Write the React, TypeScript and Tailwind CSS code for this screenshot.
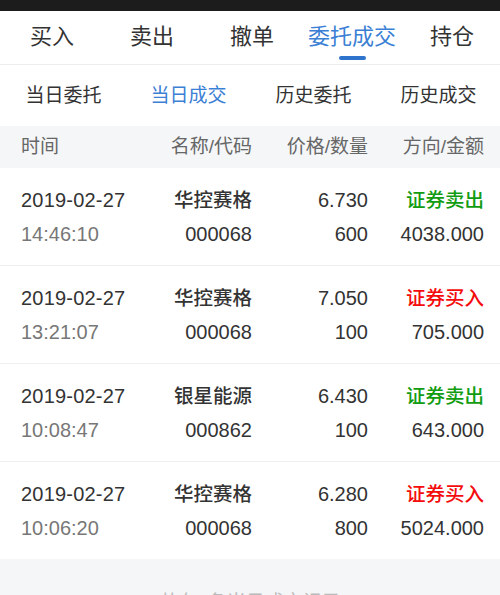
import { useState } from "react";

const mainTabs = ["买入", "卖出", "撤单", "委托成交", "持仓"];
const subTabs = ["当日委托", "当日成交", "历史委托", "历史成交"];

type Deal = {
  date: string;
  time: string;
  name: string;
  code: string;
  price: string;
  qty: string;
  side: "buy" | "sell";
  amount: string;
};

const deals: Deal[] = [
  { date: "2019-02-27", time: "14:46:10", name: "华控赛格", code: "000068", price: "6.730", qty: "600", side: "sell", amount: "4038.000" },
  { date: "2019-02-27", time: "13:21:07", name: "华控赛格", code: "000068", price: "7.050", qty: "100", side: "buy", amount: "705.000" },
  { date: "2019-02-27", time: "10:08:47", name: "银星能源", code: "000862", price: "6.430", qty: "100", side: "sell", amount: "643.000" },
  { date: "2019-02-27", time: "10:06:20", name: "华控赛格", code: "000068", price: "6.280", qty: "800", side: "buy", amount: "5024.000" },
];

const cols = "grid grid-cols-[1fr_112px_116px_116px] pl-[21px] pr-4";

export default function App() {
  const [tab, setTab] = useState(3);
  const [sub, setSub] = useState(1);

  return (
    <div className="w-[500px] h-[595px] overflow-hidden bg-[#f5f6f8] font-['Liberation_Sans','Noto_Sans_CJK_SC',sans-serif]">
      <div className="h-[11px] bg-[#1c1c1c]" />

      <div className="flex h-[54px] bg-white border-b border-[#ededed]">
        {mainTabs.map((t, i) => (
          <button
            key={t}
            onClick={() => setTab(i)}
            className={`relative flex-1 pb-[2px] text-[22px] leading-none ${
              i === tab ? "text-[#3b80d4]" : "text-[#333]"
            }`}
          >
            <span className="relative left-[2px]">{t}</span>
            {i === tab && (
              <span className="absolute left-1/2 bottom-[4px] -translate-x-[11px] w-[27px] h-[4px] rounded-full bg-[#2f74cc]" />
            )}
          </button>
        ))}
      </div>

      <div className="flex h-[61px] bg-white">
        {subTabs.map((t, i) => (
          <button
            key={t}
            onClick={() => setSub(i)}
            className={`flex-1 text-[19px] leading-none ${
              i === sub ? "text-[#3b80d4]" : "text-[#333]"
            }`}
          >
            <span className="relative left-[1px]">{t}</span>
          </button>
        ))}
      </div>

      <div className={`${cols} h-[42px] items-center text-[19px] text-[#666]`}>
        <div>时间</div>
        <div className="text-right">名称/代码</div>
        <div className="text-right">价格/数量</div>
        <div className="text-right">方向/金额</div>
      </div>

      <div className="bg-white">
        {deals.map((d, i) => (
          <div
            key={i}
            className={`${cols} pt-[15px] pb-[14px] text-[19px] leading-[34px] text-[#333] ${
              i < deals.length - 1 ? "border-b border-[#efefef]" : ""
            }`}
          >
            <div>
              <div className="text-[20px] tracking-[0.2px]">{d.date}</div>
              <div className="text-[20px] text-[#777]">{d.time}</div>
            </div>
            <div className="text-right">
              <div className="font-medium text-[19.5px]">{d.name}</div>
              <div className="text-[20px]">{d.code}</div>
            </div>
            <div className="text-right text-[20px]">
              <div>{d.price}</div>
              <div>{d.qty}</div>
            </div>
            <div className="text-right">
              <div className={`font-medium text-[19.5px] ${d.side === "buy" ? "text-[#f40c0c]" : "text-[#129c12]"}`}>
                {d.side === "buy" ? "证券买入" : "证券卖出"}
              </div>
              <div className="text-[20px]">{d.amount}</div>
            </div>
          </div>
        ))}
      </div>

      <div className="pt-[30px] text-center text-[19px] text-[#bbb]">共有4条当日成交记录</div>
    </div>
  );
}
